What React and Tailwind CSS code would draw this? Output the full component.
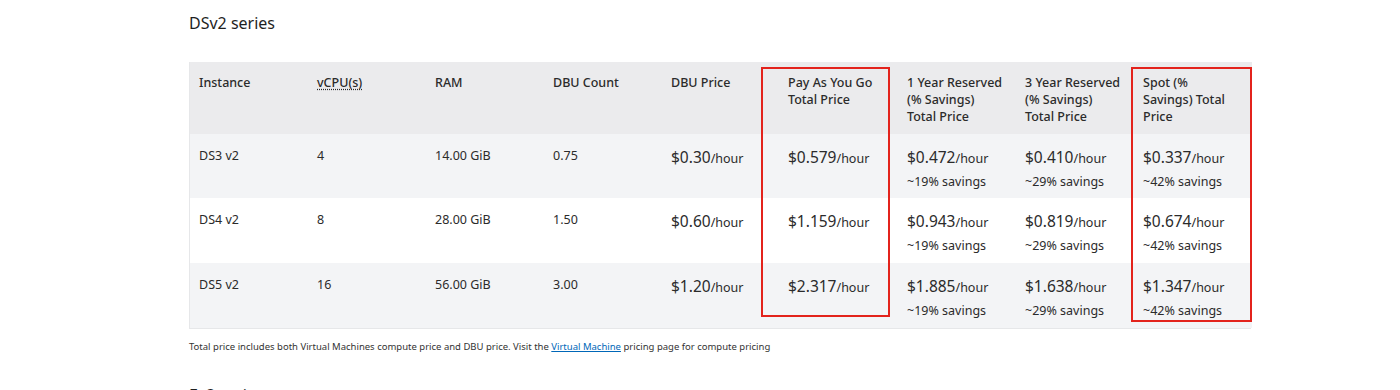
import React from "react";

const rows = [
  {
    name: "DS3 v2",
    vcpu: "4",
    ram: "14.00 GiB",
    dbu: "0.75",
    dbuPrice: "$0.30",
    payg: "$0.579",
    y1: ["$0.472", "~19% savings"],
    y3: ["$0.410", "~29% savings"],
    spot: ["$0.337", "~42% savings"],
  },
  {
    name: "DS4 v2",
    vcpu: "8",
    ram: "28.00 GiB",
    dbu: "1.50",
    dbuPrice: "$0.60",
    payg: "$1.159",
    y1: ["$0.943", "~19% savings"],
    y3: ["$0.819", "~29% savings"],
    spot: ["$0.674", "~42% savings"],
  },
  {
    name: "DS5 v2",
    vcpu: "16",
    ram: "56.00 GiB",
    dbu: "3.00",
    dbuPrice: "$1.20",
    payg: "$2.317",
    y1: ["$1.885", "~19% savings"],
    y3: ["$1.638", "~29% savings"],
    spot: ["$1.347", "~42% savings"],
  },
];

const Price = ({ value, note }) => (
  <div>
    <div className="leading-[22px]">
      <span className="text-[15.5px]">{value}</span>
      <span className="text-[12.5px]">/hour</span>
    </div>
    {note && <div className="text-[12.5px] leading-[20px] mt-[2px]">{note}</div>}
  </div>
);

// header labels, split where the original wraps
const headers = [
  ["Instance"],
  ["vCPU(s)"],
  ["RAM"],
  ["DBU Count"],
  ["DBU Price"],
  ["Pay As You Go", "Total Price"],
  ["1 Year Reserved", "(% Savings)", "Total Price"],
  ["3 Year Reserved", "(% Savings)", "Total Price"],
  ["Spot (%", "Savings) Total", "Price"],
];

export default function App() {
  return (
    <div
      className="bg-white text-[#2b2b2b] pl-[189px] pt-[12px] h-[390px] overflow-hidden"
      style={{ fontFamily: '"Noto Sans", "Open Sans", sans-serif' }}
    >
      <h2 className="text-[16px] leading-[22px] font-normal text-[#1f1f1f]">DSv2 series</h2>

      <div className="relative w-[1062px] mt-[28px] border-x border-b border-[#e6e7e9]">
        <table className="table-fixed w-full border-collapse text-[12.5px]">
          <colgroup>
            {headers.map((h) => (
              <col key={h.join(" ")} className="w-[118px]" />
            ))}
          </colgroup>
          <thead>
            <tr className="bg-[#ebebed] h-[72px]">
              {headers.map((h, i) => (
                <th
                  key={h.join(" ")}
                  className={`align-top text-left font-medium leading-[17px] pt-[12px] pr-[4px] whitespace-nowrap ${
                    i === 5 ? "pl-[8px]" : "pl-[9px]"
                  }`}
                >
                  {i === 1 ? (
                    <span className="underline decoration-dotted underline-offset-2">{h[0]}</span>
                  ) : (
                    h.map((line) => (
                      <div key={line}>{line}</div>
                    ))
                  )}
                </th>
              ))}
            </tr>
          </thead>
          <tbody>
            {rows.map((r, idx) => (
              <tr
                key={r.name}
                className={`${idx % 2 === 0 ? "bg-[#f3f4f6]" : "bg-white"} ${
                  idx === 0 ? "h-[64px]" : "h-[65px]"
                }`}
              >
                <td className="align-top pt-[13px] pl-[9px] leading-[17px]">{r.name}</td>
                <td className="align-top pt-[13px] pl-[9px] leading-[17px]">{r.vcpu}</td>
                <td className="align-top pt-[13px] pl-[9px] leading-[17px]">{r.ram}</td>
                <td className="align-top pt-[13px] pl-[9px] leading-[17px]">{r.dbu}</td>
                <td className="align-top pt-[12px] pl-[9px]">
                  <Price value={r.dbuPrice} />
                </td>
                <td className="align-top pt-[12px] pl-[8px]">
                  <Price value={r.payg} />
                </td>
                <td className="align-top pt-[12px] pl-[9px]">
                  <Price value={r.y1[0]} note={r.y1[1]} />
                </td>
                <td className="align-top pt-[12px] pl-[9px]">
                  <Price value={r.y3[0]} note={r.y3[1]} />
                </td>
                <td className="align-top pt-[12px] pl-[9px]">
                  <Price value={r.spot[0]} note={r.spot[1]} />
                </td>
              </tr>
            ))}
          </tbody>
        </table>

        {/* highlight annotations */}
        <div className="absolute left-[571px] top-[5px] w-[129px] h-[250px] border-2 border-[#e3231c] pointer-events-none" />
        <div className="absolute left-[941px] top-[5px] w-[121px] h-[255px] border-2 border-[#e3231c] pointer-events-none" />
      </div>

      <p className="text-[9.5px] leading-[14px] mt-[11px] text-[#333]">
        Total price includes both Virtual Machines compute price and DBU price. Visit the{" "}
        <a href="#" className="text-[#0067b8] underline">
          Virtual Machine
        </a>{" "}
        pricing page for compute pricing
      </p>

      <h2 className="text-[16px] leading-[22px] mt-[30px] text-[#1f1f1f]">Ev3 series</h2>
    </div>
  );
}
